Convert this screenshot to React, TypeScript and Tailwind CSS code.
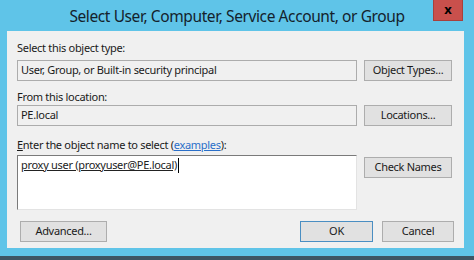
import React from 'react';

const font = { fontFamily: '"Noto Sans", "Open Sans", sans-serif' };

function Btn({ label, w, primary = false }: { label: React.ReactNode; w: string; primary?: boolean }) {
  return (
    <div
      className={`${w} h-[21px] flex items-center justify-center bg-[#e1e1e1] border text-[11px] tracking-[-0.3px] text-[#1a1a1a] ${
        primary ? 'border-[#4a8ec2]' : 'border-[#adadad]'
      }`}
    >
      {label}
    </div>
  );
}

export default function App() {
  return (
    <div
      className="w-[474px] h-[260px] flex flex-col bg-[#5fc4e8] overflow-hidden"
      style={font}
    >
      {/* title bar */}
      <div className="h-[31px] grid grid-cols-[1fr_auto_1fr] shrink-0">
        <div />
        <div className="text-[15.5px] leading-[32px] text-[#14222c] tracking-[-0.4px]">
          Select User, Computer, Service Account, or Group
        </div>
        <div className="flex justify-end pr-[11px]">
          <div className="w-[30px] h-[21px] bg-[#c9504c] border border-[#a8403c] border-t-0 flex items-center justify-center text-[13px] font-bold text-black leading-none pb-[2px]">
            x
          </div>
        </div>
      </div>

      {/* client area */}
      <div className="ml-[7px] mr-[10px] h-[217px] shrink-0 bg-[#f0f0f0] flex flex-col px-[10px] pt-[9px] text-[11px] tracking-[-0.3px] text-[#1a1a1a]">
        <div className="h-[16px] leading-[16px]">Select this object type:</div>
        <div className="mt-[4px] flex gap-[7px]">
          <div className="w-[340px] h-[21px] border border-[#acacac] bg-[#f0f0f0] flex items-center px-[3px]">
            User, Group, or Built-in security principal
          </div>
          <Btn label="Object Types..." w="w-[88px]" />
        </div>

        <div className="mt-[8px] h-[16px] leading-[16px]">From this location:</div>
        <div className="flex gap-[7px]">
          <div className="w-[340px] h-[21px] border border-[#acacac] bg-[#f0f0f0] flex items-center px-[3px]">
            PE.local
          </div>
          <Btn label="Locations..." w="w-[88px]" />
        </div>

        <div className="mt-[11px] h-[16px] leading-[16px]">
          <span className="underline">E</span>nter the object name to select (
          <span className="text-[#2a6fc9] underline">examples</span>):
        </div>
        <div className="mt-[2px] flex gap-[7px]">
          <div className="w-[340px] h-[55px] bg-white border border-[#e3e3e3] border-t-[#7a7a7a] border-l-[#7a7a7a] px-[3px] pt-[1px]">
            <div className="flex items-center h-[16px]">
              <span className="underline text-[#222]">proxy user (proxyuser@PE.local)</span>
              <span className="w-[1px] h-[15px] bg-black ml-[1px]" />
            </div>
          </div>
          <div className="mt-[2px]">
            <Btn label="Check Names" w="w-[88px]" />
          </div>
        </div>

        <div className="mt-[11px] flex items-center">
          <div className="ml-[3px]">
            <Btn label="Advanced..." w="w-[87px]" />
          </div>
          <div className="flex-1" />
          <div className="flex gap-[9px]">
            <Btn label="OK" w="w-[73px]" primary />
            <Btn label="Cancel" w="w-[72px]" />
          </div>
        </div>
      </div>

      <div className="h-[8px] shrink-0" />
      <div className="flex-1 bg-[#3d5564]" />
    </div>
  );
}
